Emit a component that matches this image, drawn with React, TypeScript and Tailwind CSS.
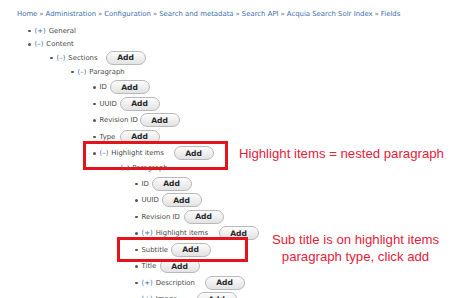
import React from 'react'

type Row = {
  level: number
  label: string
  toggle?: '+' | '-'
  add?: number
  h: string
}

const indent: Record<number, string> = {
  1: 'pl-[28px]',
  2: 'pl-[50px]',
  3: 'pl-[71px]',
  4: 'pl-[93px]',
  5: 'pl-[114px]',
  6: 'pl-[135px]'
}

const labelW: Record<number, string> = {
  10: 'w-[10px]',
  18: 'w-[18px]',
  20: 'w-[20px]',
  29: 'w-[29px]',
  40: 'w-[40px]',
  42: 'w-[42px]',
  49: 'w-[49px]',
  55: 'w-[55px]',
  63: 'w-[63px]',
  74: 'w-[74px]',
  77: 'w-[77px]'
}

const rows: Row[] = [
  { level: 1, toggle: '+', label: 'General', h: 'h-[14px]' },
  { level: 1, toggle: '-', label: 'Content', h: 'h-[13px]' },
  { level: 2, toggle: '-', label: 'Sections', add: 49, h: 'h-[14px]' },
  { level: 3, toggle: '-', label: 'Paragraph', h: 'h-[14px]' },
  { level: 4, label: 'ID', add: 10, h: 'h-[16.5px]' },
  { level: 4, label: 'UUID', add: 20, h: 'h-[16.5px]' },
  { level: 4, label: 'Revision ID', add: 40, h: 'h-[16.5px]' },
  { level: 4, label: 'Type', add: 20, h: 'h-[16.5px]' },
  { level: 4, toggle: '-', label: 'Highlight items', add: 74, h: 'h-[16.5px]' },
  { level: 5, toggle: '-', label: 'Paragraph', h: 'h-[14px]' },
  { level: 6, label: 'ID', add: 10, h: 'h-[16.5px]' },
  { level: 6, label: 'UUID', add: 20, h: 'h-[16.5px]' },
  { level: 6, label: 'Revision ID', add: 42, h: 'h-[16.5px]' },
  { level: 6, toggle: '+', label: 'Highlight items', add: 77, h: 'h-[16.5px]' },
  { level: 6, label: 'Subtitle', add: 29, h: 'h-[16.5px]' },
  { level: 6, label: 'Title', add: 18, h: 'h-[16.5px]' },
  { level: 6, toggle: '+', label: 'Description', add: 63, h: 'h-[16.5px]' },
  { level: 6, toggle: '+', label: 'Image', add: 55, h: 'h-[16.5px]' }
]

const crumbs = [
  'Home',
  'Administration',
  'Configuration',
  'Search and metadata',
  'Search API',
  'Acquia Search Solr Index',
  'Fields'
]

function AddButton() {
  return (
    <span className="inline-flex h-[14px] w-[40px] items-center justify-center rounded-full border border-[#b9b9b9] bg-gradient-to-b from-[#fdfdfd] to-[#e2e2e2] text-[7.6px] font-bold text-[#2a2a2a]">
      Add
    </span>
  )
}

function TreeRow({ row }: { row: Row }) {
  return (
    <li className={`flex items-center ${row.h} ${indent[row.level]}`}>
      <span className="mr-[4px] h-[2.5px] w-[2.5px] rounded-full bg-[#555]" />
      <span
        className={`whitespace-nowrap ${row.add ? labelW[row.add] : ''}`}
      >
        {row.toggle && (
          <span className="mr-[3px] text-[#3a70b0]">({row.toggle === '-' ? '–' : '+'})</span>
        )}
        {row.label}
      </span>
      {row.add && <AddButton />}
    </li>
  )
}

export default function App() {
  return (
    <div className="relative h-[298px] w-[474px] overflow-hidden bg-white font-['DejaVu_Sans',sans-serif] text-[6.9px] text-[#4a4a4a]">
      <div className="flex h-[24px] items-center pl-[17px] pt-[4px] text-[6.9px] text-[#3a6fae]">
        {crumbs.map((c, i) => (
          <span key={c} className="whitespace-nowrap">
            {c}
            {i < crumbs.length - 1 && <span className="px-[2px] text-[#777]">»</span>}
          </span>
        ))}
      </div>

      <ul>
        {rows.map((r, i) => (
          <TreeRow key={i} row={r} />
        ))}
      </ul>

      {/* annotations */}
      <div className="absolute left-[83px] top-[141px] h-[29px] w-[145px] border-[3px] border-[#e5131c]" />
      <div className="absolute left-[117px] top-[237px] h-[25px] w-[131px] border-[3px] border-[#e5131c]" />

      <div className="absolute left-[239px] top-[146px] whitespace-nowrap font-['Liberation_Sans',sans-serif] text-[13.2px] leading-[16px] text-[#e5223a]">
        Highlight items = nested paragraph
      </div>
      <div className="absolute left-[255px] top-[232px] w-[201px] text-center font-['Liberation_Sans',sans-serif] text-[13.2px] leading-[16.5px] text-[#e5223a]">
        Sub title is on highlight items
        <br />
        paragraph type, click add
      </div>
    </div>
  )
}
